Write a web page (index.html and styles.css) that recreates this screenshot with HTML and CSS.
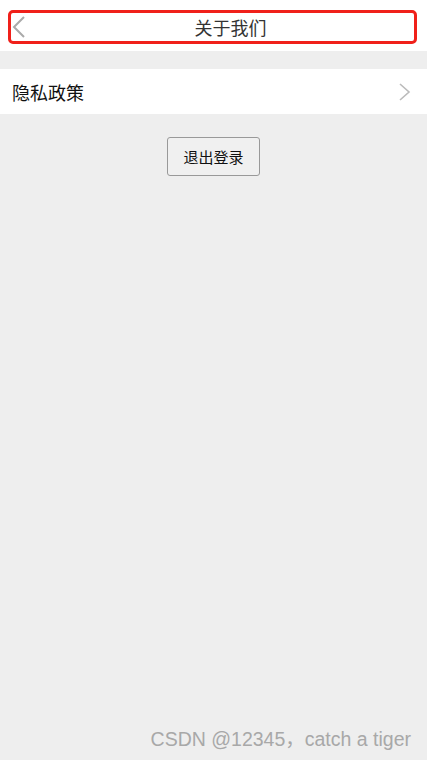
FILE: index.html
```html
<!DOCTYPE html>
<html>
	<head>
		<meta charset="utf-8">
		<title>关于我们</title>
		<link rel="stylesheet" href="styles.css">
	</head>
	<body>
		<div class="header">
			<div class="titlebar">
				<div class="back">
					<svg width="14" height="22" viewBox="0 0 14 22"><path d="M12 1 L2 11 L12 21" fill="none" stroke="#aaa" stroke-width="2"/></svg>
				</div>
				<div class="title">关于我们</div>
			</div>
		</div>

		<div class="row">
			<div class="rowtext">隐私政策</div>
			<svg class="arrow" width="12" height="18" viewBox="0 0 12 18"><path d="M1 1 L10 9 L1 17" fill="none" stroke="#bbb" stroke-width="1.6"/></svg>
		</div>

		<div class="actions">
			<button class="logout">退出登录</button>
		</div>

		<div class="watermark">CSDN @12345，catch a tiger</div>
	</body>
</html>
```
FILE: styles.css
```css
html, body{
	margin:0;
	padding:0;
	height:100%;
}
body{
	background-color:#eee;
	font-family:"Noto Sans CJK SC", "Liberation Sans", sans-serif;
	position:relative;
}
div.header{
	background-color:#fff;
	padding:10px 10px 7px 8px;
}
div.titlebar{
	border:3px solid #f0201a;
	border-radius:5px;
	height:28px;
	display:flex;
	align-items:center;
}
div.back{
	width:35px;
	display:flex;
	align-items:center;
	padding-left:1px;
}
div.title{
	flex:1;
	text-align:center;
	font-size:18px;
	color:#333;
	line-height:28px;
}
div.row{
	margin-top:18px;
	background-color:#fff;
	height:45px;
	display:flex;
	align-items:center;
	justify-content:space-between;
	padding:0 16px 0 12px;
}
div.rowtext{
	font-size:18px;
	color:#111;
}
div.actions{
	text-align:center;
	padding-top:23px;
}
button.logout{
	width:93px;
	height:39px;
	border:1px solid #999;
	border-radius:3px;
	background-color:#f0f0f0;
	font-family:"Noto Sans CJK SC", sans-serif;
	font-size:15px;
	color:#111;
	padding:0;
}
div.watermark{
	position:absolute;
	right:16px;
	bottom:8px;
	font-family:"Liberation Sans", "Noto Sans CJK SC", sans-serif;
	font-size:19.5px;
	color:#a8a8a8;
}
```
